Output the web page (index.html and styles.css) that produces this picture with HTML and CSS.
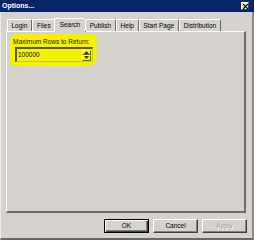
FILE: index.html
```html
<!DOCTYPE html>
<html>
<head>
<meta charset="utf-8">
<link rel="stylesheet" href="styles.css">
</head>
<body>
<div class="window">
  <div class="titlebar">
    <span class="title">Options...</span>
    <span class="close">
      <svg width="5" height="5" viewBox="0 0 5 5"><path d="M0 0L5 5M5 0L0 5" stroke="#000" stroke-width="1.2"/></svg>
    </span>
  </div>
  <div class="body">
    <div class="tabs">
      <div class="tab tab-login">Login</div>
      <div class="tab tab-files">Files</div>
      <div class="tab active tab-search">Search</div>
      <div class="tab tab-publish">Publish</div>
      <div class="tab tab-help">Help</div>
      <div class="tab tab-start">Start Page</div>
      <div class="tab tab-dist">Distribution</div>
    </div>
    <div class="panel">
      <div class="highlight">
        <div class="label">Maximum Rows to Return:</div>
        <div class="spinbox">
          <span class="value">100000</span>
          <span class="spin">
            <span class="spin-btn"><svg width="5" height="3" viewBox="0 0 5 3"><path d="M2.5 0L5 3H0Z" fill="#333"/></svg></span>
            <span class="spin-btn"><svg width="5" height="3" viewBox="0 0 5 3"><path d="M0 0H5L2.5 3Z" fill="#333"/></svg></span>
          </span>
        </div>
      </div>
    </div>
    <div class="buttons">
      <div class="btn default">OK</div>
      <div class="btn">Cancel</div>
      <div class="btn disabled">Apply</div>
    </div>
  </div>
</div>
</body>
</html>
```
FILE: styles.css
```css
html, body {
  margin: 0;
  padding: 0;
  background: #d6d3ce;
}
body {
  font-family: "Liberation Sans", Arial, sans-serif;
  font-size: 6.5px;
  color: #000;
}
.window {
  width: 254px;
  height: 240px;
  display: flex;
  flex-direction: column;
  background: #d6d3ce;
  overflow: hidden;
}
.titlebar {
  height: 12px;
  flex: none;
  background: #0a246a;
  display: flex;
  align-items: center;
  justify-content: space-between;
  padding: 0 5px 0 2px;
}
.title {
  color: #fff;
  font-weight: bold;
  font-size: 7px;
  line-height: 12px;
}
.close {
  width: 8px;
  height: 8px;
  box-sizing: border-box;
  background: #e4e2de;
  border-top: 1px solid #fff;
  border-left: 1px solid #fff;
  border-right: 1px solid #404040;
  border-bottom: 1px solid #404040;
  display: flex;
  align-items: center;
  justify-content: center;
}
.close svg { display: block; }
.body {
  flex: 1;
  display: flex;
  flex-direction: column;
  border-left: 1px solid #eeece8;
  border-right: 2px solid #8a8884;
  border-bottom: 2px solid #6a6864;
  padding: 6px 5px 5px 5px;
}
.tabs {
  display: flex;
  align-items: flex-end;
  height: 13px;
  margin-left: 1px;
  position: relative;
  z-index: 1;
}
.tab {
  height: 12px;
  box-sizing: border-box;
  line-height: 11px;
  padding: 0 4px 0 3.5px;
  border-top: 1px solid #fff;
  border-left: 1px solid #fff;
  border-right: 1px solid #6e6c68;
  border-radius: 1px 1px 0 0;
  background: #d6d3ce;
  white-space: nowrap;
}
.tab.active {
  height: 14px;
  margin: 0 -1px -1px -2px;
  padding: 0 5px 0 5px;
  line-height: 12px;
}
.panel {
  height: 182px;
  box-sizing: border-box;
  margin-right: 1px;
  border-top: 1px solid #fff;
  border-left: 1px solid #fff;
  border-right: 2px solid #6e6c68;
  border-bottom: 2px solid #6e6c68;
  padding: 2px 0 0 3px;
}
.highlight {
  width: 87px;
  box-sizing: border-box;
  background: #f4f200;
  border-radius: 7px 4px 8px 5px;
  padding: 4px 4px 4px 3px;
}
.label {
  line-height: 8px;
  height: 8px;
  color: #222;
}
.spinbox {
  margin: 1px 0 0 2px;
  height: 15px;
  box-sizing: border-box;
  border-top: 2px solid #5a5a20;
  border-left: 2px solid #5a5a20;
  border-right: 1px solid #c8c640;
  border-bottom: 1px solid #c8c640;
  display: flex;
  align-items: center;
  justify-content: space-between;
  padding: 0 1px 0 1px;
}
.value {
  line-height: 10px;
}
.spin {
  display: flex;
  flex-direction: column;
  width: 9px;
  height: 11px;
}
.spin-btn {
  flex: 1;
  display: flex;
  align-items: center;
  justify-content: center;
  box-sizing: border-box;
  border-left: 1px solid #fbfa80;
  border-top: 1px solid #fbfa80;
  border-right: 1px solid #6a6820;
  border-bottom: 1px solid #6a6820;
}
.spin-btn svg { display: block; }
.buttons {
  display: flex;
  justify-content: flex-end;
  gap: 4px;
  margin-top: 6px;
}
.btn {
  width: 45px;
  height: 14px;
  box-sizing: border-box;
  border-top: 1px solid #fff;
  border-left: 1px solid #fff;
  border-right: 1px solid #404040;
  border-bottom: 1px solid #404040;
  box-shadow: inset -1px -1px 0 #808080;
  text-align: center;
  line-height: 12px;
}
.btn.default {
  border: 1px solid #000;
  box-shadow: inset 1px 1px 0 #fff, inset -1px -1px 0 #404040, inset -2px -2px 0 #808080;
}
.btn.disabled {
  color: #a09e98;
  text-shadow: 1px 1px 0 #fff;
}
```
